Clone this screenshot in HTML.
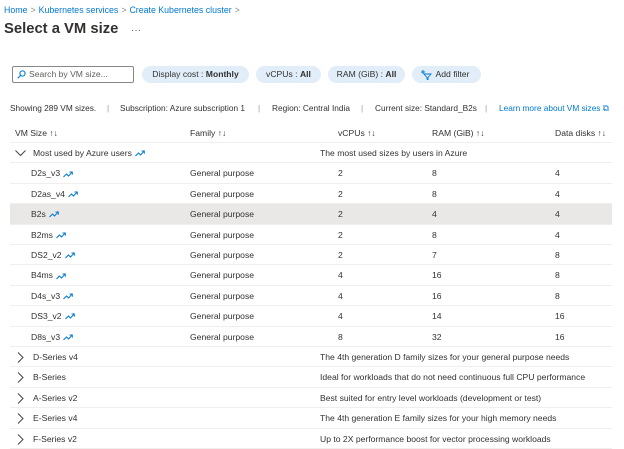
<!DOCTYPE html>
<html><head><meta charset="utf-8"><style>
*{margin:0;padding:0;box-sizing:border-box}
body{width:624px;height:446px;overflow:hidden;background:#fff;font-family:"Segoe UI","Liberation Sans",sans-serif;color:#323130;font-size:8.6px;position:relative}
.a{position:absolute;white-space:nowrap}
.bc{top:5px;left:4px;color:#0078d4;font-size:8.8px}
.bc span{color:#888;margin:0 3px}
h1{position:absolute;top:21px;left:4px;font-size:14.8px;font-weight:700;color:#323130}
.pill{position:absolute;top:66px;height:17px;border-radius:9px;background:#e1edf9;font-size:8.6px;line-height:17px;text-align:center;color:#323130}
.pill b{font-weight:700}
.row{position:absolute;left:10px;width:602px;height:20.4px;border-bottom:1px solid #f0efee;line-height:20px}
.row .c{position:absolute;top:0;white-space:nowrap}
.tr{display:inline-block;vertical-align:middle;margin-left:3px}
.hl{background:#e9e8e7}
.meta{top:103px;font-size:8.3px}
</style></head><body>
<div class="a bc">Home<span>&gt;</span>Kubernetes services<span>&gt;</span>Create Kubernetes cluster<span>&gt;</span></div>
<h1>Select a VM size</h1>
<div class="a" style="top:25px;left:131px;font-size:10px;color:#555">···</div>

<div class="a" style="top:66px;left:12px;width:122px;height:17px;border:1px solid #8a8886;border-radius:2px;font-size:8.6px;line-height:15px;padding-left:16px;color:#605e5c">Search by VM size...
<svg style="position:absolute;left:4px;top:3px" width="9" height="9" viewBox="0 0 9 9"><circle cx="5.5" cy="3.5" r="2.6" fill="none" stroke="#0078d4" stroke-width="1"/><line x1="3.6" y1="5.4" x2="0.8" y2="8.2" stroke="#0078d4" stroke-width="1.1"/></svg></div>
<div class="pill" style="left:142px;width:107px">Display cost : <b>Monthly</b></div>
<div class="pill" style="left:256px;width:65px">vCPUs : <b>All</b></div>
<div class="pill" style="left:328px;width:77px">RAM (GiB) : <b>All</b></div>
<div class="pill" style="left:412px;width:69px;padding-left:12px">Add filter
<svg style="position:absolute;left:8px;top:3px" width="12" height="11" viewBox="0 0 12 11"><path d="M3 1v4M1 3h4" stroke="#0078d4" stroke-width="1"/><path d="M4 5h7L8 8.5V11L7 10V8.5z" fill="none" stroke="#0078d4" stroke-width="0.9"/></svg></div>

<div class="a meta" style="left:10px">Showing 289 VM sizes.</div>
<div class="a meta" style="left:107px;color:#999">|</div>
<div class="a meta" style="left:120px">Subscription: Azure subscription 1</div>
<div class="a meta" style="left:258px;color:#999">|</div>
<div class="a meta" style="left:272px">Region: Central India</div>
<div class="a meta" style="left:361px;color:#999">|</div>
<div class="a meta" style="left:375px">Current size: Standard_B2s</div>
<div class="a meta" style="left:485px;color:#999">|</div>
<div class="a meta" style="left:499px;color:#0078d4">Learn more about VM sizes ⧉</div>

<div class="row" style="top:122.6px"><span class="c" style="left:5px">VM Size ↑↓</span><span class="c" style="left:180px">Family ↑↓</span><span class="c" style="left:328px">vCPUs ↑↓</span><span class="c" style="left:422px">RAM (GiB) ↑↓</span><span class="c" style="left:545px">Data disks ↑↓</span></div>
<div class="row" style="top:143px"><svg class="c" style="left:5px;top:7px" width="11" height="7" viewBox="0 0 11 7"><path d="M0.5 0.5L5.5 5.5L10.5 0.5" fill="none" stroke="#444" stroke-width="1"/></svg><span class="c" style="left:23px">Most used by Azure users<svg class="tr" width="10" height="7" viewBox="0 0 10 7"><path d="M0.5 6L3.5 3L5.5 5L9 1.2M6.5 1h2.8v2.8" fill="none" stroke="#0078d4" stroke-width="1"/></svg></span><span class="c" style="left:310px">The most used sizes by users in Azure</span></div>

<div id="rows"></div>
<script>
var d=[["D2s_v3",2,8,4],["D2as_v4",2,8,4],["B2s",2,4,4],["B2ms",2,8,4],["DS2_v2",2,7,8],["B4ms",4,16,8],["D4s_v3",4,16,8],["DS3_v2",4,14,16],["D8s_v3",8,32,16]];
var s=[["D-Series v4","The 4th generation D family sizes for your general purpose needs"],["B-Series","Ideal for workloads that do not need continuous full CPU performance"],["A-Series v2","Best suited for entry level workloads (development or test)"],["E-Series v4","The 4th generation E family sizes for your high memory needs"],["F-Series v2","Up to 2X performance boost for vector processing workloads"]];
var tr='<svg class="tr" width="10" height="7" viewBox="0 0 10 7"><path d="M0.5 6L3.5 3L5.5 5L9 1.2M6.5 1h2.8v2.8" fill="none" stroke="#0078d4" stroke-width="1"/></svg>';
var h='',t=163.4;
d.forEach(function(r,i){h+='<div class="row'+(i==2?' hl':'')+'" style="top:'+t+'px"><span class="c" style="left:21px">'+r[0]+tr+'</span><span class="c" style="left:180px">General purpose</span><span class="c" style="left:328px">'+r[1]+'</span><span class="c" style="left:422px">'+r[2]+'</span><span class="c" style="left:545px">'+r[3]+'</span></div>';t+=20.4;});
s.forEach(function(r,i){h+='<div class="row" style="top:'+t+'px"><svg class="c" style="left:7px;top:5px" width="7" height="11" viewBox="0 0 7 11"><path d="M1 0.5L6 5.5L1 10.5" fill="none" stroke="#444" stroke-width="1"/></svg><span class="c" style="left:23px">'+r[0]+'</span><span class="c" style="left:310px">'+r[1]+'</span></div>';t+=20.4;});
document.getElementById('rows').innerHTML=h;
</script>
</body></html>
